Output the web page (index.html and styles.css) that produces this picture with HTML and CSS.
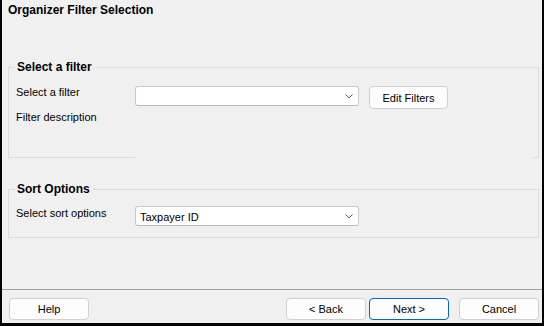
FILE: index.html
```html
<!DOCTYPE html>
<html lang="en">
<head>
    <meta charset="UTF-8">
    <title>Organizer Filter Selection</title>
    <link rel="stylesheet" href="styles.css">
</head>
<body>
    <div class="window">
        <div class="title">Organizer Filter Selection</div>

        <!-- filter group -->
        <fieldset class="group group-filter">
            <legend>Select a filter</legend>
            <div class="row row-filter">
                <label class="label">Select a filter</label>
                <div class="combo">
                    <span class="combo-text"></span>
                    <svg class="chevron" width="8" height="5" viewBox="0 0 8 5"><path d="M0.5 0.5 L4 4 L7.5 0.5" fill="none" stroke="#5f5f5f" stroke-width="1"/></svg>
                </div>
                <button class="btn btn-edit">Edit Filters</button>
            </div>
            <div class="row row-desc">
                <label class="label">Filter description</label>
            </div>
            <div class="edge">
                <span class="edge-left"></span>
                <span class="edge-right"></span>
            </div>
        </fieldset>

        <!-- sort group -->
        <fieldset class="group group-sort">
            <legend>Sort Options</legend>
            <div class="row row-sort">
                <label class="label">Select sort options</label>
                <div class="combo">
                    <span class="combo-text">Taxpayer ID</span>
                    <svg class="chevron" width="8" height="5" viewBox="0 0 8 5"><path d="M0.5 0.5 L4 4 L7.5 0.5" fill="none" stroke="#5f5f5f" stroke-width="1"/></svg>
                </div>
            </div>
        </fieldset>

        <div class="footer">
            <button class="btn">Help</button>
            <div class="footer-right">
                <button class="btn">&lt; Back</button>
                <button class="btn btn-default">Next &gt;</button>
                <button class="btn btn-cancel">Cancel</button>
            </div>
        </div>
    </div>
</body>
</html>
```

FILE: styles.css
```css
* {
    margin: 0;
    padding: 0;
    box-sizing: border-box;
}

body {
    background: #000000;
    font-family: 'Liberation Sans', Arial, sans-serif;
    font-size: 11px;
    color: #000000;
}

.window {
    width: 544px;
    height: 326px;
    background: #f0f0f0;
    border-style: solid;
    border-color: #000000;
    border-width: 0 2px 3px 2px;
    display: flex;
    flex-direction: column;
}

.title {
    padding: 3px 6px 0;
    font-size: 12px;
    font-weight: bold;
    line-height: 14px;
}

/* group boxes */
.group {
    border: 1px solid #dcdcdc;
    margin: 0 3px 0 6px;
    min-width: 0;
}

.group legend {
    font-size: 12px;
    font-weight: bold;
    line-height: 14px;
    padding: 0 3px 0 2px;
    margin-left: 6px;
}

.group-filter {
    margin-top: 43px;
    border-bottom: none;
}

.group-sort {
    margin-top: 24px;
    padding-bottom: 11px;
}

.row {
    display: flex;
    align-items: flex-start;
    padding-left: 7px;
}

.row-filter {
    margin-top: 11px;
}

.row-desc {
    margin-top: 2px;
}

.row-sort {
    margin-top: 9px;
}

.label {
    width: 119px;
    line-height: 13px;
}

.row-filter .label {
    margin-top: 1px;
}

.row-sort .label {
    margin-top: 2px;
}

.combo {
    width: 224px;
    height: 20px;
    margin-top: 1px;
    background: #ffffff;
    border: 1px solid #cacaca;
    border-bottom-color: #b8b8b8;
    border-radius: 3px;
    display: flex;
    align-items: center;
    justify-content: space-between;
    padding: 2px 5px 0 4px;
}

.combo-text {
    line-height: 14px;
}

.chevron {
    margin-top: -2px;
}

.edge {
    display: flex;
    justify-content: space-between;
    margin-top: 33px;
}

.edge-left,
.edge-right {
    border-top: 1px solid #dcdcdc;
}

.edge-left { width: 126px; }
.edge-right { width: 5px; }

/* buttons */
.btn {
    width: 80px;
    height: 22px;
    background: #fdfdfd;
    border: 1px solid #d0d0d0;
    border-radius: 4px;
    font-family: 'Liberation Sans', Arial, sans-serif;
    font-size: 11px;
    color: #000000;
}

.btn-edit {
    width: 79px;
    height: 23px;
    margin-left: 10px;
    margin-top: 1px;
}

.btn-default {
    border-color: #0067c0;
}

.footer {
    margin-top: auto;
    border-top: 1px solid #a0a0a0;
    padding: 8px 3px 3px 7px;
    display: flex;
    justify-content: space-between;
}

.footer-right {
    display: flex;
    gap: 3px;
}

.btn-cancel {
    margin-left: 7px;
}
```
